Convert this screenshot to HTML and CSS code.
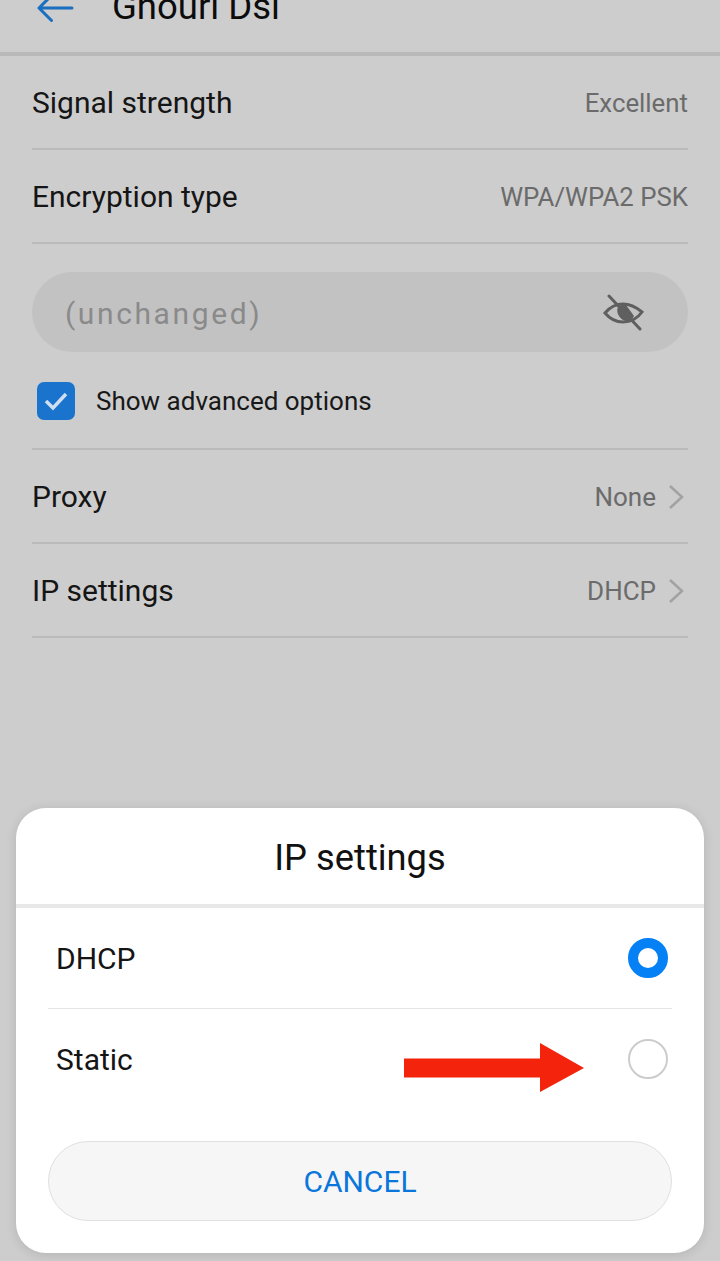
FILE: index.html
```html
<!DOCTYPE html>
<html lang="en">
<head>
<meta charset="utf-8">
<title>IP settings</title>
<link rel="stylesheet" href="styles.css">
</head>
<body>
<div class="screen">
  <header class="appbar">
    <svg class="back" width="38" height="28" viewBox="0 0 38 28"><path d="M36 8H3M15.500 -4.500 3 8l12.500 12.500" fill="none" stroke="#1a6fc0" stroke-width="3" stroke-linecap="round" stroke-linejoin="round"/></svg>
    <h1 class="appbar-title">Ghouri Dsl</h1>
  </header>
  <main class="content">
    <div class="row"><span class="row-label">Signal strength</span><span class="row-value">Excellent</span></div>
    <div class="row"><span class="row-label">Encryption type</span><span class="row-value">WPA/WPA2 PSK</span></div>
    <div class="field">
      <span class="field-text">(unchanged)</span>
      <svg class="eye" width="42" height="38" viewBox="0 0 42 38"><path d="M2 19c5-6 11-9 18-9s13 3 19 8c-5 7-11 10-19 10S7 25 2 19Z" fill="none" stroke="#5f5f5f" stroke-width="3"/><path d="M15 13c4-3 6-3 8-2l8 11c-1 3-4 5-7 5-6 0-12-8-9-14Z" fill="#5f5f5f"/><path d="M6 2l31 33" stroke="#5f5f5f" stroke-width="3" stroke-linecap="round"/></svg>
    </div>
    <label class="check">
      <span class="check-box"><svg width="24" height="20" viewBox="0 0 24 20"><path d="M2 10l7 7L22 3" fill="none" stroke="#cfdff0" stroke-width="3.500"/></svg></span>
      <span class="check-label">Show advanced options</span>
    </label>
    <div class="row row-link"><span class="row-label">Proxy</span><span class="row-value">None</span><svg class="chev" width="16" height="26" viewBox="0 0 16 26"><path d="M2 2l12 11L2 24" fill="none" stroke="#a2a2a2" stroke-width="2.500"/></svg></div>
    <div class="row row-link"><span class="row-label">IP settings</span><span class="row-value">DHCP</span><svg class="chev" width="16" height="26" viewBox="0 0 16 26"><path d="M2 2l12 11L2 24" fill="none" stroke="#a2a2a2" stroke-width="2.500"/></svg></div>
  </main>
  <section class="sheet">
    <h2 class="sheet-title">IP settings</h2>
    <div class="option option-first"><span>DHCP</span><span class="radio radio-on"></span></div>
    <div class="option"><span>Static</span><span class="radio"></span></div>
    <button class="cancel">CANCEL</button>
  </section>
  <svg class="arrow" width="180" height="50" viewBox="0 0 180 50"><path d="M0 15.500H136V0L180 25 136 49V34.500H0Z" fill="#f4230c"/></svg>
</div>
</body>
</html>
```
FILE: styles.css
```css
* { box-sizing: border-box; }
html, body { margin: 0; padding: 0; }
body { font-family: Roboto, "Liberation Sans", sans-serif; background: #cdcdcd; }
.screen { position: relative; width: 720px; height: 1261px; overflow: hidden; background: #cdcdcd; }
.appbar { height: 56px; border-bottom: 4px solid #b9b9b9; display: flex; align-items: flex-start; padding-left: 36px; }
.back { flex: none; overflow: visible; }
.appbar-title { margin: -12px 0 0 38px; font-size: 36.500px; font-weight: 400; line-height: 38px; color: #0c0c0c; }
.content { padding: 0 32px; }
.row { height: 94px; padding-top: 1px; border-bottom: 2px solid #bababa; display: flex; align-items: center; }
.row-label { font-size: 30px; color: #151515; flex: 1; }
.row-value { font-size: 25.800px; color: #6b6b6b; }
.row-link .row-value { margin-right: 12px; font-size: 26px; }
.chev { flex: none; margin-right: 4px; }
.field { height: 80px; margin-top: 28px; padding: 0 43px 0 33px; border-radius: 40px; background: #c2c2c2; display: flex; align-items: center; justify-content: space-between; }
.field-text { font-size: 30px; letter-spacing: 2.600px; color: #8a8a8a; margin-top: 2px; }
.eye { flex: none; margin-top: 1px; }
.check { height: 98px; padding: 1px 0 0 5px; border-bottom: 2px solid #bababa; display: flex; align-items: center; }
.check-box { width: 38px; height: 38px; border-radius: 7px; background: #1a73cc; display: flex; align-items: center; justify-content: center; }
.check-label { margin-left: 21px; font-size: 26px; color: #181818; }
.sheet { position: absolute; left: 16px; top: 808px; width: 688px; height: 445px; border-radius: 30px; background: #fff; box-shadow: 0 2px 12px rgba(0,0,0,.12); display: flex; flex-direction: column; align-items: stretch; }
.sheet-title { margin: 0; height: 100px; border-bottom: 4px solid #e8e8e8; text-align: center; font-size: 36.300px; font-weight: 400; line-height: 99px; color: #111; }
.option { height: 100px; margin: 0 32px; padding: 0 4px 0 8px; display: flex; align-items: center; justify-content: space-between; font-size: 30px; color: #151515; }
.option-first { height: 101px; border-bottom: 1px solid #e4e4e4; }
.radio { width: 40px; height: 40px; border-radius: 50%; border: 2px solid #cccccc; }
.radio-on { border: 10px solid #0580f5; }
.cancel { margin: 32px 32px 0; height: 80px; border-radius: 40px; border: 1px solid #e0e0e0; background: #f6f6f6; color: #0a76db; font: 400 30px Roboto, "Liberation Sans", sans-serif; }
.arrow { position: absolute; left: 404px; top: 1043px; }
```
